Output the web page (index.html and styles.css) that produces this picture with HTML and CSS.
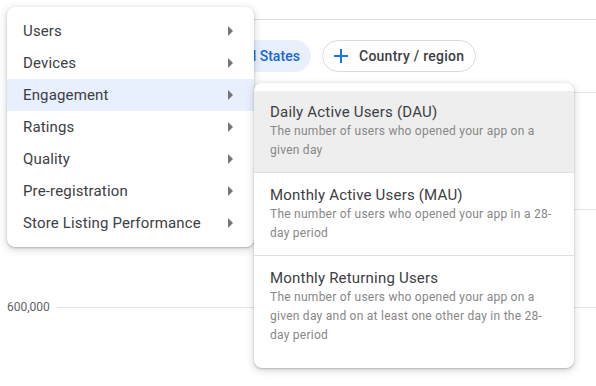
FILE: index.html
```html
<!DOCTYPE html>
<html>
<head>
<meta charset="utf-8">
<link rel="stylesheet" href="styles.css">
</head>
<body>
<div class="page">
  <div class="header"></div>
  <div class="chips">
    <div class="chip chip-selected"><span>United States</span></div>
    <div class="chip chip-outline">
      <svg class="plus" width="16" height="16" viewBox="0 0 16 16"><path d="M8 1v14M1 8h14" stroke="#1a73e8" stroke-width="2" fill="none"/></svg>
      <span>Country / region</span>
    </div>
  </div>
  <div class="divider"></div>
  <div class="chart">
    <div class="grid-row"><span class="axis-label"></span><div class="grid-line"></div></div>
    <div class="grid-row"><span class="axis-label">600,000</span><div class="grid-line"></div></div>
  </div>

  <div class="menu">
    <div class="menu-item"><span>Users</span><i class="arrow"></i></div>
    <div class="menu-item"><span>Devices</span><i class="arrow"></i></div>
    <div class="menu-item active"><span>Engagement</span><i class="arrow"></i></div>
    <div class="menu-item"><span>Ratings</span><i class="arrow"></i></div>
    <div class="menu-item"><span>Quality</span><i class="arrow"></i></div>
    <div class="menu-item"><span>Pre-registration</span><i class="arrow"></i></div>
    <div class="menu-item"><span>Store Listing Performance</span><i class="arrow"></i></div>
  </div>

  <div class="submenu">
    <div class="sub-item hovered">
      <div class="sub-title">Daily Active Users (DAU)</div>
      <div class="sub-desc">The number of users who opened your app on a given day</div>
    </div>
    <div class="sub-item">
      <div class="sub-title">Monthly Active Users (MAU)</div>
      <div class="sub-desc">The number of users who opened your app in a 28-day period</div>
    </div>
    <div class="sub-item">
      <div class="sub-title">Monthly Returning Users</div>
      <div class="sub-desc">The number of users who opened your app on a given day and on at least one other day in the 28-day period</div>
    </div>
  </div>
</div>
</body>
</html>
```

FILE: styles.css
```css
* { box-sizing: border-box; }
html, body { margin: 0; padding: 0; background: #fff; }
body { font-family: Roboto, "Liberation Sans", Arial, sans-serif; }

.page {
  position: relative;
  width: 596px;
  height: 386px;
  overflow: hidden;
  background: #fff;
}

.header {
  height: 20px;
  margin-left: 30px;
  border-bottom: 1px solid #dadce0;
}

.chips {
  display: flex;
  align-items: center;
  gap: 11px;
  margin-top: 20px;
  padding-left: 150px;
  height: 32px;
}

.chip {
  height: 32px;
  border-radius: 16px;
  display: flex;
  align-items: center;
  font-size: 14px;
  font-weight: 500;
  letter-spacing: 0.25px;
  white-space: nowrap;
}

.chip-selected {
  width: 161px;
  justify-content: flex-end;
  padding-right: 11px;
  background: #e8f0fe;
  color: #1967d2;
  letter-spacing: 0.05px;
}

.chip-outline {
  border: 1px solid #dadce0;
  padding: 0 11px 0 10px;
  gap: 10px;
  color: #3c4043;
}

.plus { display: block; }

.divider {
  height: 1px;
  margin: 20px 0 0 57px;
  background: #e3e3e3;
}

.chart {
  display: flex;
  flex-direction: column;
  gap: 78px;
  margin-top: 106px;
}

.grid-row {
  display: flex;
  align-items: center;
  height: 20px;
  padding-left: 7px;
}

.axis-label {
  width: 50px;
  font-size: 12px;
  color: #5f6368;
}

.grid-line {
  flex: 1;
  height: 1px;
  background: #e3e3e3;
}

.menu {
  position: absolute;
  left: 7px;
  top: 7px;
  width: 247px;
  padding: 8px 0;
  background: #fff;
  border-radius: 8px;
  box-shadow: 0 1px 2px rgba(60,64,67,.3), 0 2px 6px 2px rgba(60,64,67,.15);
  z-index: 1;
}

.menu-item {
  height: 32px;
  display: flex;
  align-items: center;
  justify-content: space-between;
  padding: 0 21px 0 16px;
  font-size: 15px;
  letter-spacing: 0.15px;
  color: #3c4043;
}

.menu-item.active { background: #e8f0fe; }

.arrow {
  width: 0;
  height: 0;
  border-left: 5px solid #757575;
  border-top: 5px solid transparent;
  border-bottom: 5px solid transparent;
}

.submenu {
  position: absolute;
  left: 254px;
  top: 83px;
  width: 320px;
  padding: 8px 0 11px;
  background: #fff;
  border-radius: 8px;
  box-shadow: 0 1px 2px rgba(60,64,67,.3), 0 2px 6px 2px rgba(60,64,67,.15);
  z-index: 2;
}

.sub-item {
  padding: 12px 22px 12px 16px;
  border-top: 1px solid #e0e0e0;
}
.sub-item:first-child { padding-top: 11px; border-top: none; }
.sub-item.hovered { background: #eeeeee; }

.sub-title {
  font-size: 15px;
  line-height: 20px;
  letter-spacing: 0.2px;
  color: #3c4043;
}

.sub-desc {
  font-size: 12px;
  line-height: 19px;
  letter-spacing: 0.25px;
  color: #878787;
}
```
